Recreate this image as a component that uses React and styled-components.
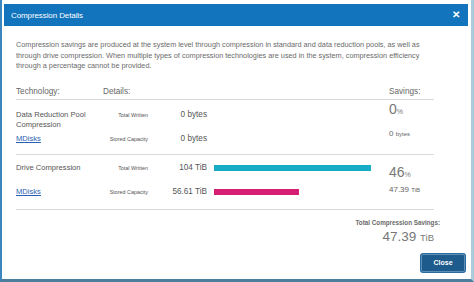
import React from "react";
import styled, { createGlobalStyle } from "styled-components";

const Global = createGlobalStyle`
  html, body { margin: 0; padding: 0; background: #fff; }
  body { font-family: "Liberation Sans", Arial, sans-serif; }
  * { box-sizing: border-box; }
`;

const Frame = styled.div`
  width: 474px;
  height: 282px;
  background: #fff;
  border-left: 2px solid #3a86bd;
  border-right: 3px solid #a9cbdc;
  border-bottom: 3px solid #4d7d9c;
  padding: 4px 3px 0 2px;
  display: flex;
  flex-direction: column;
  overflow: hidden;
`;

const Header = styled.div`
  height: 22px;
  background: #1174bd;
  display: flex;
  align-items: center;
  justify-content: space-between;
  padding: 0 8px 0 7px;
  color: #fff;
`;

const Title = styled.div`
  font-size: 8px;
  letter-spacing: -0.1px;
`;

const CloseX = styled.div`
  font-size: 10px;
  font-weight: bold;
  line-height: 1;
`;

const Body = styled.div`
  padding: 14px 34px 0 12px;
  display: flex;
  flex-direction: column;
`;

const Description = styled.p`
  margin: 0;
  font-size: 7.3px;
  line-height: 10.5px;
  color: #6a6a6a;
  white-space: nowrap;
`;

const TableHead = styled.div`
  display: grid;
  grid-template-columns: 87px 286px 45px;
  margin-top: 13px;
  height: 15px;
  align-items: center;
  font-size: 8.2px;
  color: #666;
  border-bottom: 1px solid #d9d9d9;
`;

const Row = styled.div`
  display: grid;
  grid-template-columns: 88px 44px 59px 7px 175px 45px;
  grid-template-rows: 24px 24px;
  height: 55px;
  padding-top: ${(p) => p.$top}px;
  border-bottom: 1px solid #d9d9d9;
  color: #555;
`;

const Tech = styled.div`
  grid-column: 1;
  font-size: 7.6px;
  line-height: 10px;
  color: #555;
`;

const Link = styled.a`
  grid-column: 1;
  font-size: 7.6px;
  line-height: 10px;
  color: #2b5fb4;
  text-decoration: underline;
  align-self: start;
`;

const Label = styled.div`
  grid-column: 2;
  font-size: 5.4px;
  line-height: 10px;
  text-align: right;
  color: #555;
  white-space: nowrap;
`;

const Value = styled.div`
  grid-column: 3;
  font-size: 8.2px;
  line-height: 10px;
  text-align: right;
  color: #555;
  white-space: nowrap;
`;

const BarCell = styled.div`
  grid-column: 5;
  height: 10px;
  display: flex;
  align-items: center;
`;

const Bar = styled.div`
  height: 6px;
  background: ${(p) => p.$color};
`;

const Savings = styled.div`
  grid-column: 6;
  grid-row: 1 / span 2;
  display: flex;
  flex-direction: column;
  margin-top: ${(p) => p.$top}px;
  gap: ${(p) => p.$gap}px;
  color: #707070;
  white-space: nowrap;
`;

const Big = styled.div`
  font-size: 14px;
  line-height: 16px;
  color: #777;
`;

const BigUnit = styled.span`
  font-size: 7px;
`;

const Small = styled.div`
  font-size: 8px;
  line-height: 10px;
  color: #666;
`;

const SmallUnit = styled.span`
  font-size: 6px;
`;

const Summary = styled.div`
  display: flex;
  flex-direction: column;
  align-items: flex-end;
  margin-top: 8px;
`;

const SummaryLabel = styled.div`
  font-size: 6.3px;
  font-weight: bold;
  color: #6a6a6a;
  line-height: 10px;
  margin-right: -6px;
`;

const SummaryValue = styled.div`
  font-size: 13.5px;
  line-height: 18px;
  color: #777;
`;

const SummaryUnit = styled.span`
  font-size: 9.5px;
`;

const Footer = styled.div`
  display: flex;
  justify-content: flex-end;
  padding: 0 3px 0 0;
  margin-top: 7px;
`;

const Button = styled.button`
  width: 44px;
  height: 18px;
  background: #1d5b8c;
  border: 1px solid #5d8fb6;
  border-radius: 2px;
  color: #fff;
  font-family: "Liberation Sans", Arial, sans-serif;
  font-size: 7px;
  font-weight: bold;
  padding: 0;
  box-shadow: 0 0 0 1px #2a6a9c;
`;

const rows = [
  {
    tech: ["Data Reduction Pool", "Compression"],
    written: "0 bytes",
    stored: "0 bytes",
    writtenVal: 0,
    storedVal: 0,
    pct: "0",
    saved: "0",
    savedUnit: "bytes",
    top: 10,
    sTop: -9,
    sGap: 9,
  },
  {
    tech: ["Drive Compression"],
    written: "104 TiB",
    stored: "56.61 TiB",
    writtenVal: 104,
    storedVal: 56.61,
    pct: "46",
    saved: "47.39",
    savedUnit: "TiB",
    top: 8,
    sTop: 1,
    sGap: 2,
  },
];

const MAX = 104;
const BAR_MAX = 157;

export default function App() {
  return (
    <>
      <Global />
      <Frame>
        <Header>
          <Title>Compression Details</Title>
          <CloseX>✕</CloseX>
        </Header>
        <Body>
          <Description>
            Compression savings are produced at the system level through compression in standard and data reduction pools, as well as
            <br />
            through drive compression. When multiple types of compression technologies are used in the system, compression efficiency
            <br />
            through a percentage cannot be provided.
          </Description>
          <TableHead>
            <span>Technology:</span>
            <span>Details:</span>
            <span>Savings:</span>
          </TableHead>
          {rows.map((r, i) => (
            <Row key={i} $top={r.top}>
              <Tech style={{ gridRow: 1 }}>
                {r.tech.map((t, j) => (
                  <div key={j}>{t}</div>
                ))}
              </Tech>
              <Label style={{ gridRow: 1 }}>Total Written</Label>
              <Value style={{ gridRow: 1 }}>{r.written}</Value>
              <BarCell style={{ gridRow: 1 }}>
                {r.writtenVal > 0 && (
                  <Bar $color="#17abc6" style={{ width: (r.writtenVal / MAX) * BAR_MAX }} />
                )}
              </BarCell>
              <Link href="#" style={{ gridRow: 2 }}>MDisks</Link>
              <Label style={{ gridRow: 2 }}>Stored Capacity</Label>
              <Value style={{ gridRow: 2 }}>{r.stored}</Value>
              <BarCell style={{ gridRow: 2 }}>
                {r.storedVal > 0 && (
                  <Bar $color="#d61f74" style={{ width: (r.storedVal / MAX) * BAR_MAX }} />
                )}
              </BarCell>
              <Savings $top={r.sTop} $gap={r.sGap}>
                <Big>
                  {r.pct}
                  <BigUnit>%</BigUnit>
                </Big>
                <Small>
                  {r.saved} <SmallUnit>{r.savedUnit}</SmallUnit>
                </Small>
              </Savings>
            </Row>
          ))}
          <Summary>
            <SummaryLabel>Total Compression Savings:</SummaryLabel>
            <SummaryValue>
              47.39 <SummaryUnit>TiB</SummaryUnit>
            </SummaryValue>
          </Summary>
        </Body>
        <Footer>
          <Button>Close</Button>
        </Footer>
      </Frame>
    </>
  );
}
